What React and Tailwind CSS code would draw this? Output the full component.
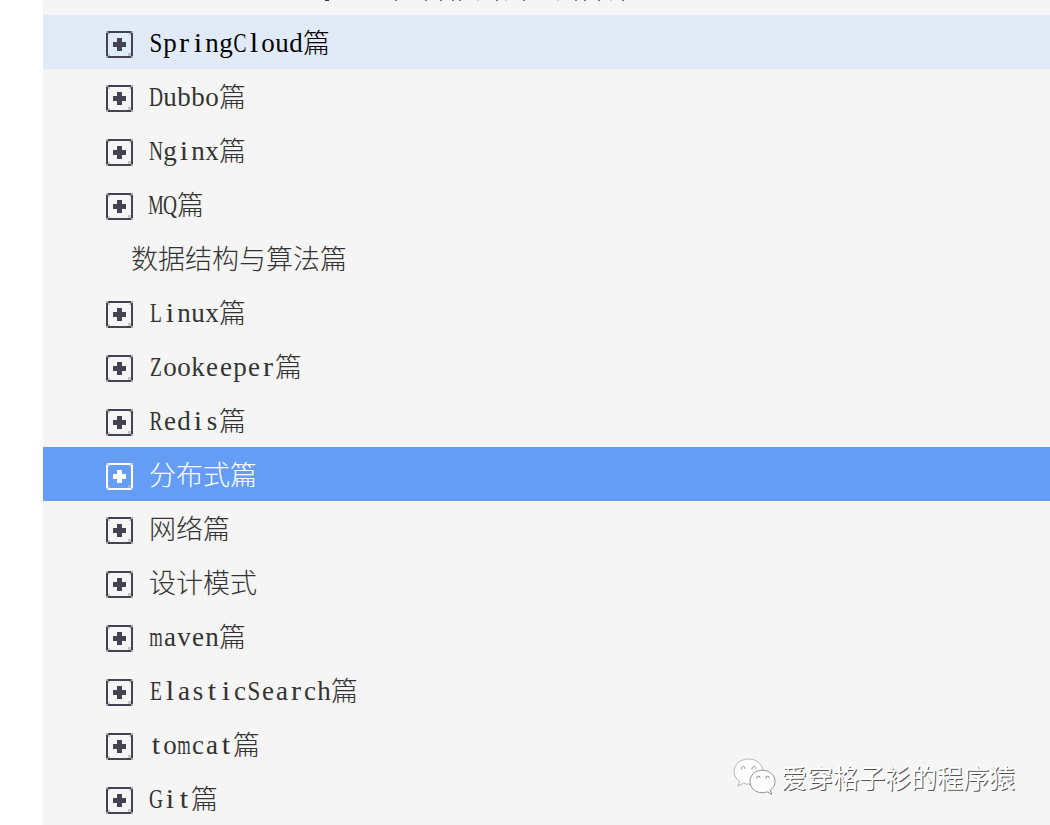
import React from "react";
import clsx from "clsx";

const items = [
  { name: "SpringCloud", suffix: "篇", state: "hover" },
  { name: "Dubbo", suffix: "篇" },
  { name: "Nginx", suffix: "篇" },
  { name: "MQ", suffix: "篇" },
  { name: "", suffix: "数据结构与算法篇", leaf: true },
  { name: "Linux", suffix: "篇" },
  { name: "Zookeeper", suffix: "篇" },
  { name: "Redis", suffix: "篇" },
  { name: "", suffix: "分布式篇", state: "selected" },
  { name: "", suffix: "网络篇" },
  { name: "", suffix: "设计模式" },
  { name: "maven", suffix: "篇" },
  { name: "ElasticSearch", suffix: "篇" },
  { name: "tomcat", suffix: "篇" },
  { name: "Git", suffix: "篇" },
];

// lower edge of the row scrolled out at the top
const specks = [395, 425, 440, 452, 459, 496, 523, 575, 584, 598, 622];
const faintSpecks = [477, 505, 557, 610];

const ExpandIcon = ({ selected }) => (
  <svg
    width="27"
    height="27"
    viewBox="0 0 27 27"
    shapeRendering="crispEdges"
    className={clsx("shrink-0", selected ? "text-white" : "text-[#444352]")}
    fill="currentColor"
  >
    <path d="M2 0h23v2H2zM2 25h23v2H2zM0 2h2v23H0zM25 2h2v23h-2z" />
    <path
      opacity="0.4"
      d="M0 0h2v2H0zM25 0h2v2h-2zM0 25h2v2H0zM25 25h2v2h-2z"
    />
    <path
      opacity="0.25"
      d="M2 2h2v2H2zM23 2h2v2h-2zM2 23h2v2H2zM22 22h3v3h-3z"
    />
    <path d="M11 7h5v4h4v5h-4v4h-5v-4H7v-5h4z" />
  </svg>
);

// every latin letter takes half of a full width cell
const Letter = ({ char }) => (
  <span
    className={clsx(
      "inline-flex w-[14px] justify-center",
      "mM".includes(char) && "scale-x-[0.64]",
      "DNQCGZREL".includes(char) && "scale-x-[0.72]",
      char === "S" && "scale-x-[0.85]",
      "iltr".includes(char) && "scale-x-[1.12]"
    )}
  >
    {char}
  </span>
);

const TreeRow = ({ item }) => (
  <div
    className={clsx(
      "flex h-[54px] shrink-0 items-center",
      item.leaf ? "pl-[88px]" : "pl-[63px]",
      item.state === "hover" && "bg-[#e1ebf7] text-black",
      item.state === "selected" && "bg-[#659cf5] text-white",
      !item.state && "text-[#333333]"
    )}
  >
    {!item.leaf && (
      <div className="mr-4 pt-[5px]">
        <ExpandIcon selected={item.state === "selected"} />
      </div>
    )}
    <div className="flex items-center whitespace-nowrap pb-px text-[27px] leading-[40px]">
      {item.name && (
        <span className="pt-[2px] font-['Liberation_Serif',serif]">
          {item.name.split("").map((char, i) => (
            <Letter key={i} char={char} />
          ))}
        </span>
      )}
      <span className="font-['Noto_Sans_CJK_SC',sans-serif] font-light">
        {item.suffix}
      </span>
    </div>
  </div>
);

const Watermark = () => (
  <div className="absolute left-[733px] top-[757px] flex items-center">
    <svg width="43" height="40" viewBox="0 0 43 40" fill="#fdfdfd">
      <g stroke="#a5a5a5" strokeWidth="0.8">
        <path d="M15.500 2C7.500 2 1 7.500 1 14.500c0 4 2.200 7.500 5.700 9.900L5 29l5.400-2.700c2 .6 3.300.9 5.100.9C23.500 27.200 30 21.500 30 14.500S23.500 2 15.500 2z" />
        <path
          stroke="#777777"
          d="M29.300 13.200C22.300 13.200 17 18 17 24.500s5.300 11.200 12.300 11.200c1.700 0 3.300-.3 4.700-.9l4.800 2.500-1.500-4.200c2.900-2.200 4.700-5 4.700-8.600 0-6.500-5.700-11.300-12.700-11.300z"
        />
        <path
          stroke="#777777"
          d="M8.600 12.500a1.900 1.900 0 1 1 3.400-.6M19.300 12.500a1.900 1.900 0 1 1 3.400-.6M24 21.500a1.600 1.600 0 1 1 3-.5M33 21.500a1.600 1.600 0 1 1 3-.5"
        />
      </g>
    </svg>
    <span className="ml-[5px] whitespace-nowrap font-['Noto_Sans_CJK_SC',sans-serif] text-[26px] leading-[40px] text-white [text-shadow:1px_1px_0_#555555]">
      爱穿格子衫的程序猿
    </span>
  </div>
);

const App = () => {
  return (
    <div className="relative h-[825px] w-[1050px] overflow-hidden bg-white pl-[43px]">
      <div className="flex h-full flex-col bg-[#f5f5f5]">
        <div className="h-[15px] shrink-0">
          <svg width="1007" height="2" viewBox="43 0 1007 2" className="block">
            <rect x="325" y="0" width="4" height="1" fill="#333333" />
            {specks.map((x) => (
              <rect key={x} x={x} y="0" width="2" height="1" fill="#777788" />
            ))}
            {faintSpecks.map((x) => (
              <rect key={x} x={x} y="0" width="2" height="1" fill="#dccfc2" />
            ))}
          </svg>
        </div>
        {items.map((item) => (
          <TreeRow key={item.name + item.suffix} item={item} />
        ))}
      </div>
      <Watermark />
    </div>
  );
};

export default App;
